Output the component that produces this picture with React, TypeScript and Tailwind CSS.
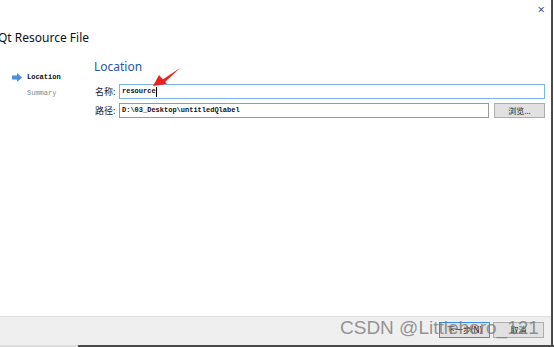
import React from 'react';

const ui = { fontFamily: '"Noto Sans", "Noto Sans CJK SC", sans-serif' };
const mono = { fontFamily: '"Liberation Mono", "Noto Sans CJK SC", monospace' };

const NavArrow = () => (
  <svg width="10" height="9" viewBox="0 0 10 9">
    <path d="M0 2.5 H5 V0 L10 4.5 L5 9 V6.5 H0 Z" fill="#4a8fe0" />
  </svg>
);

const App: React.FC = () => {
  return (
    <div className="relative w-[554px] h-[347px] bg-white overflow-hidden" style={ui}>
      <div className="flex flex-col w-[553px] h-[345px] border-r-2 border-[#4a4a4a]">
        <div className="flex justify-end pr-[6px] pt-[2px] h-[16px]">
          <span className="text-[13px] leading-[14px] text-[#555]">×</span>
        </div>
        <div className="pt-[14px] -ml-[2px] text-[12px] leading-[16px] text-[#111]">Qt Resource File</div>

        <div className="flex flex-1 pt-[13px]">
          <div className="w-[94px] pt-[10px] pl-[12px]">
            <div className="flex items-center h-[16px] gap-[5px]">
              <NavArrow />
              <span className="text-[7px] font-bold text-[#111]" style={mono}>Location</span>
            </div>
            <div className="flex items-center h-[16px] pl-[15px]">
              <span className="text-[7px] text-[#8a8a8a]" style={mono}>Summary</span>
            </div>
          </div>

          <div className="flex-1 pr-[6px]">
            <div className="text-[12px] leading-[16px] text-[#2a55a8]">Location</div>
            <div className="flex items-center mt-[9px] h-[15px]">
              <span className="w-[25px] pl-[1px] text-[9px] text-[#222]">名称:</span>
              <div className="flex-1 h-[15px] border border-[#7db4ea] flex items-center px-[2px]">
                <span className="text-[7px] font-bold text-[#111]" style={mono}>resource</span>
                <span className="w-px h-[10px] bg-black" />
              </div>
            </div>
            <div className="flex items-center mt-[4px] h-[15px]">
              <span className="w-[25px] pl-[1px] text-[9px] text-[#222]">路径:</span>
              <div className="flex-1 h-[15px] border border-[#9a9a9a] flex items-center px-[2px]">
                <span className="text-[7px] font-bold text-[#111]" style={mono}>D:\03_Desktop\untitledQlabel</span>
              </div>
              <button className="ml-[5px] w-[51px] h-[15px] border border-[#adadad] bg-[#e1e1e1] text-[8px] text-[#222] leading-none">
                浏览...
              </button>
            </div>
          </div>
        </div>

        <div className="h-[29px] border-t border-[#e0e0e0] bg-[#efefef] flex items-center justify-end gap-[3px] pr-[7px] pb-[2px]">
          <button className="w-[51px] h-[16px] border border-[#3a8ee6] bg-[#e1e1e1] text-[8px] text-[#111] leading-none">下一步(N)</button>
          <button className="w-[51px] h-[16px] border border-[#adadad] bg-[#e1e1e1] text-[8px] text-[#111] leading-none">取消</button>
        </div>
      </div>
      <div className="flex h-[2px]">
        <div className="w-[78px] bg-[#dcdcdc]" />
        <div className="flex-1 bg-[#4a4a4a]" />
      </div>

      <svg className="absolute left-[150px] top-[64px]" width="34" height="26" viewBox="0 0 34 26">
        <path d="M30 4 L12 16 L14 19 Z" fill="#e8231a" />
        <path d="M3 22 L9 11 L17 20 Z" fill="#e8231a" />
      </svg>

      <div
        className="absolute left-[340px] top-[315px] text-[19px] leading-[26px] text-[#7a7a7a]/80 whitespace-nowrap"
        style={{ fontFamily: '"Liberation Sans", Arial, sans-serif' }}
      >
        CSDN @Littlehero_121
      </div>
    </div>
  );
};

export default App;
